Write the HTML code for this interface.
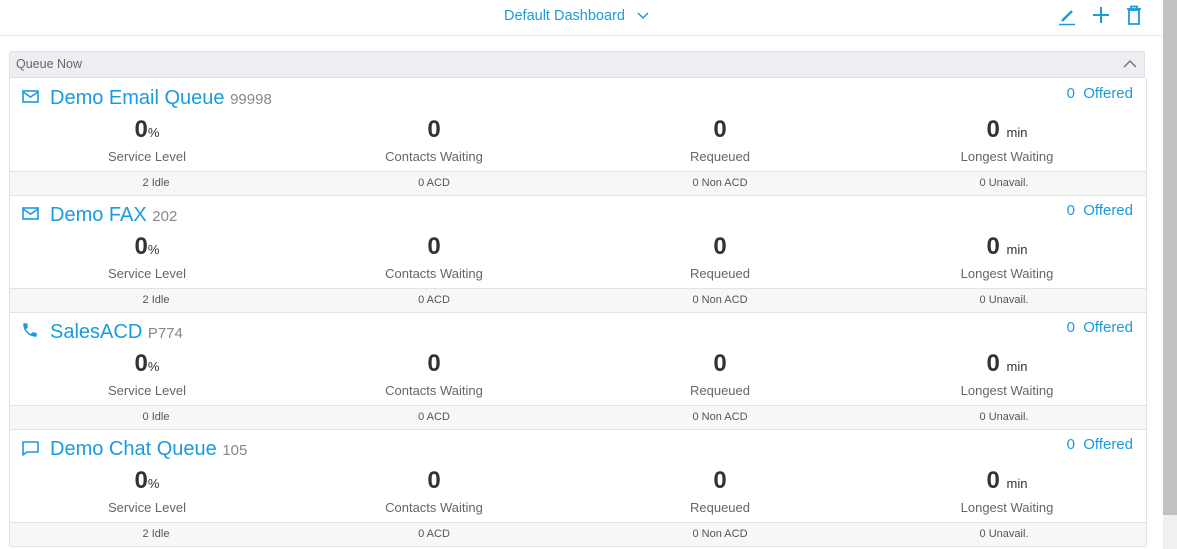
<!DOCTYPE html><html><head><style>
body{margin:0;width:1177px;height:549px;overflow:hidden;background:#fff;font-family:"Liberation Sans",sans-serif;position:relative}
.a{position:absolute}
.c{position:absolute;transform:translateX(-50%);white-space:nowrap;text-align:center}
.blk{position:absolute;left:9px;width:1136px;height:117px;border-left:1px solid #dde1e8;border-right:1px solid #dde1e8}
.big{font-size:24px;color:#333;font-weight:bold;top:38px}
.big small{font-size:13px;font-weight:normal}
.lbl{font-size:13px;color:#666;top:71px}
.ft{position:absolute;left:0;right:0;top:93px;height:23px;background:#f7f7f7;border-top:1px solid #e3e3e3;border-bottom:1px solid #e3e3e3}
.ft span{position:absolute;transform:translateX(-50%);font-size:11px;color:#555;top:5px}
.t{left:40px;top:9px;font-size:20px;color:#1a9be0}
.t i{font-style:normal;font-size:15px;color:#888}
.off{right:13px;top:7px;font-size:15px;color:#1a9be0}
</style></head><body>
<div class="a" style="left:0;right:14px;top:35px;border-top:1px solid #e6e6e6"></div>
<div class="a" style="left:504px;top:8px;font-size:14.5px;color:#1a9be0">Default Dashboard <svg width="12" height="8" style="margin-left:8px" viewBox="0 0 12 8"><path d="M1 1l5 5 5-5" stroke="#1a9be0" fill="none" stroke-width="1.5"/></svg></div>
<svg class="a" style="left:1058px;top:6px" width="20" height="20" viewBox="0 0 20 20"><path d="M4 15L14 5" stroke="#1a9be0" stroke-width="2.5"/><path d="M1 18.5h16" stroke="#1a9be0" stroke-width="1.5"/></svg>
<svg class="a" style="left:1092px;top:6px" width="18" height="18"><path d="M9 1v16M1 9h16" stroke="#1a9be0" stroke-width="2"/></svg>
<svg class="a" style="left:1126px;top:5px" width="16" height="20"><path d="M1 4h14M5 4V1.5h6V4M3 5v14h10V5z" stroke="#1a9be0" stroke-width="1.8" fill="none"/></svg>
<div class="a" style="left:1163px;top:0;width:14px;height:515px;background:#c1c1c1"></div>
<div class="a" style="left:1163px;top:515px;width:14px;height:34px;background:#f0f0f0"></div>
<div class="a" style="left:9px;top:51px;width:1134px;height:25px;background:#eceef2;border:1px solid #dde1e8;border-radius:3px 3px 0 0"></div>
<div class="a" style="left:16px;top:57px;font-size:12.5px;color:#666">Queue Now</div>
<svg class="a" style="left:1123px;top:59px" width="14" height="9"><path d="M1 8l6-6 6 6" stroke="#777" fill="none" stroke-width="1.5"/></svg>

<div class="blk" style="top:78px">
<svg class="a" style="left:12px;top:12px" width="17" height="13"><rect x="1" y="1" width="15" height="11" stroke="#1a9be0" stroke-width="1.6" fill="none"/><path d="M1 2l7.5 5 7.5-5" stroke="#1a9be0" stroke-width="1.6" fill="none"/></svg>
<div class="a t">Demo Email Queue <i>99998</i></div><div class="a off">0&nbsp; Offered</div>
<div class="c big" style="left:137px">0<small>%</small></div><div class="c lbl" style="left:137px">Service Level</div>
<div class="c big" style="left:424px">0</div><div class="c lbl" style="left:424px">Contacts Waiting</div>
<div class="c big" style="left:710px">0</div><div class="c lbl" style="left:710px">Requeued</div>
<div class="c big" style="left:997px">0 <small>min</small></div><div class="c lbl" style="left:997px">Longest Waiting</div>
<div class="ft"><span style="left:146px">2 Idle</span><span style="left:424px">0 ACD</span><span style="left:710px">0 Non ACD</span><span style="left:994px">0 Unavail.</span></div></div>

<div class="blk" style="top:195px">
<svg class="a" style="left:12px;top:12px" width="17" height="13"><rect x="1" y="1" width="15" height="11" stroke="#1a9be0" stroke-width="1.6" fill="none"/><path d="M1 2l7.5 5 7.5-5" stroke="#1a9be0" stroke-width="1.6" fill="none"/></svg>
<div class="a t">Demo FAX <i>202</i></div><div class="a off">0&nbsp; Offered</div>
<div class="c big" style="left:137px">0<small>%</small></div><div class="c lbl" style="left:137px">Service Level</div>
<div class="c big" style="left:424px">0</div><div class="c lbl" style="left:424px">Contacts Waiting</div>
<div class="c big" style="left:710px">0</div><div class="c lbl" style="left:710px">Requeued</div>
<div class="c big" style="left:997px">0 <small>min</small></div><div class="c lbl" style="left:997px">Longest Waiting</div>
<div class="ft"><span style="left:146px">2 Idle</span><span style="left:424px">0 ACD</span><span style="left:710px">0 Non ACD</span><span style="left:994px">0 Unavail.</span></div></div>

<div class="blk" style="top:312px">
<svg class="a" style="left:11px;top:9px" width="18" height="18" viewBox="0 0 24 24"><path fill="#1a9be0" d="M6.6 10.8c1.4 2.8 3.8 5.1 6.6 6.6l2.2-2.2c.3-.3.7-.4 1-.2 1.1.4 2.3.6 3.6.6.6 0 1 .4 1 1V20c0 .6-.4 1-1 1C10.6 21 3 13.4 3 4c0-.6.4-1 1-1h3.5c.6 0 1 .4 1 1 0 1.3.2 2.5.6 3.6.1.3 0 .7-.2 1z"/></svg>
<div class="a t">SalesACD <i>P774</i></div><div class="a off">0&nbsp; Offered</div>
<div class="c big" style="left:137px">0<small>%</small></div><div class="c lbl" style="left:137px">Service Level</div>
<div class="c big" style="left:424px">0</div><div class="c lbl" style="left:424px">Contacts Waiting</div>
<div class="c big" style="left:710px">0</div><div class="c lbl" style="left:710px">Requeued</div>
<div class="c big" style="left:997px">0 <small>min</small></div><div class="c lbl" style="left:997px">Longest Waiting</div>
<div class="ft"><span style="left:146px">0 Idle</span><span style="left:424px">0 ACD</span><span style="left:710px">0 Non ACD</span><span style="left:994px">0 Unavail.</span></div></div>

<div class="blk" style="top:429px">
<svg class="a" style="left:12px;top:12px" width="17" height="15"><path d="M1 1h15v10H5l-4 3z" stroke="#1a9be0" stroke-width="1.6" fill="none" stroke-linejoin="round"/></svg>
<div class="a t">Demo Chat Queue <i>105</i></div><div class="a off">0&nbsp; Offered</div>
<div class="c big" style="left:137px">0<small>%</small></div><div class="c lbl" style="left:137px">Service Level</div>
<div class="c big" style="left:424px">0</div><div class="c lbl" style="left:424px">Contacts Waiting</div>
<div class="c big" style="left:710px">0</div><div class="c lbl" style="left:710px">Requeued</div>
<div class="c big" style="left:997px">0 <small>min</small></div><div class="c lbl" style="left:997px">Longest Waiting</div>
<div class="ft"><span style="left:146px">2 Idle</span><span style="left:424px">0 ACD</span><span style="left:710px">0 Non ACD</span><span style="left:994px">0 Unavail.</span></div></div>
</body></html>
